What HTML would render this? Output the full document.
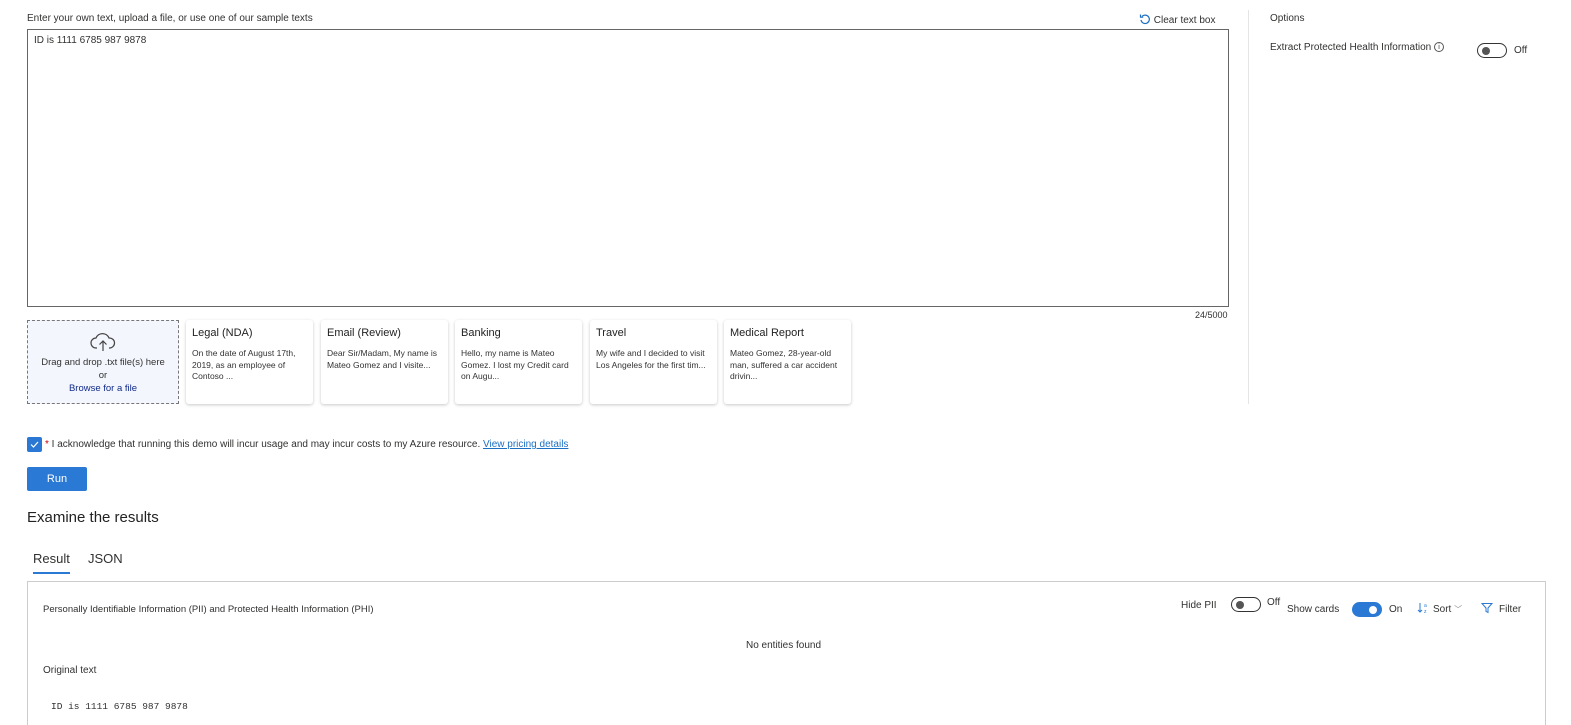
<!DOCTYPE html><html><head><style>
*{margin:0;padding:0;box-sizing:border-box}
html,body{width:1571px;height:725px;overflow:hidden}
body{background:#fff;font-family:"Liberation Sans",sans-serif;color:#323130;position:relative;font-size:10px}
.a{position:absolute;white-space:nowrap}
.card{position:absolute;top:320px;width:127px;height:84px;background:#fff;border-radius:3px;box-shadow:0 1px 3px rgba(0,0,0,.22);padding:7px 6px}
.card b{font-weight:normal;font-size:11px;display:block;margin-bottom:9px;color:#222}
.card p{font-size:8.5px;line-height:11.5px;color:#333;white-space:normal}
.tg{position:absolute;width:30px;height:15px;border:1px solid #333;border-radius:8px}
.tg i{position:absolute;top:3px;left:4px;width:8px;height:8px;border-radius:50%;background:#555}
</style></head><body>
<div class="a" style="left:27px;top:13px">Enter your own text, upload a file, or use one of our sample texts</div>
<div class="a" style="left:1139px;top:13px"><svg width="12" height="12" viewBox="0 0 12 12" style="vertical-align:-2px"><path d="M3 3.5A4.2 4.2 0 1 1 2 7" fill="none" stroke="#1d6fc4" stroke-width="1.2"/><path d="M1.5 1.5V4.2H4.2" fill="none" stroke="#1d6fc4" stroke-width="1.2"/></svg> Clear text box</div>
<div class="a" style="left:27px;top:29px;width:1202px;height:278px;border:1px solid #666"></div>
<div class="a" style="left:34px;top:35px">ID is 1111 6785 987 9878</div>
<div class="a" style="left:1195px;top:310px;font-size:9px">24/5000</div>
<div class="a" style="left:1248px;top:10px;width:1px;height:394px;background:#e5e5e5"></div>
<div class="a" style="left:1270px;top:13px">Options</div>
<div class="a" style="left:1270px;top:42px">Extract Protected Health Information <span style="display:inline-block;width:10px;height:10px;border:1px solid #555;border-radius:50%;font-size:7px;text-align:center;line-height:9px;vertical-align:1px">i</span></div>
<div class="tg" style="left:1477px;top:43px"><i></i></div>
<div class="a" style="left:1514px;top:45px">Off</div>
<div class="a" style="left:27px;top:320px;width:152px;height:84px;border:1px dashed #777;background:#f3f6fc;text-align:center;padding-top:11px;font-size:9.5px;line-height:13px;color:#333">
<svg width="28" height="20" viewBox="0 0 28 20"><path d="M8 16H7a5 5 0 0 1 0-10 7 7 0 0 1 13 0 5 5 0 0 1 1 10h-1" fill="none" stroke="#444" stroke-width="1.2"/><path d="M14 19V9M10.5 12.5 14 9l3.5 3.5" fill="none" stroke="#444" stroke-width="1.2"/></svg><br>Drag and drop .txt file(s) here<br>or<br><span style="color:#102a8a">Browse for a file</span></div>
<div class="card" style="left:186px"><b>Legal (NDA)</b><p>On the date of August 17th, 2019, as an employee of Contoso ...</p></div>
<div class="card" style="left:321px"><b>Email (Review)</b><p>Dear Sir/Madam, My name is Mateo Gomez and I visite...</p></div>
<div class="card" style="left:455px"><b>Banking</b><p>Hello, my name is Mateo Gomez. I lost my Credit card on Augu...</p></div>
<div class="card" style="left:590px"><b>Travel</b><p>My wife and I decided to visit Los Angeles for the first tim...</p></div>
<div class="card" style="left:724px"><b>Medical Report</b><p>Mateo Gomez, 28-year-old man, suffered a car accident drivin...</p></div>
<div class="a" style="left:27px;top:437px;width:15px;height:15px;background:#2b78d4;border-radius:2px"><svg width="15" height="15"><path d="M4 7.5l2.5 2.5L11 5" fill="none" stroke="#fff" stroke-width="1.2"/></svg></div>
<div class="a" style="left:45px;top:439px;font-size:10px"><span style="color:#c00">*</span> I acknowledge that running this demo will incur usage and may incur costs to my Azure resource. <span style="color:#1d6fc4;text-decoration:underline">View pricing details</span></div>
<div class="a" style="left:27px;top:467px;width:60px;height:24px;background:#2a7ad5;border-radius:2px;color:#fff;text-align:center;line-height:24px;font-size:11px">Run</div>
<div class="a" style="left:27px;top:509px;font-size:15px;color:#222">Examine the results</div>
<div class="a" style="left:33px;top:551px;font-size:13px">Result</div>
<div class="a" style="left:33px;top:572px;width:37px;height:2px;background:#2a7ad5"></div>
<div class="a" style="left:88px;top:551px;font-size:13px">JSON</div>
<div class="a" style="left:27px;top:581px;width:1519px;height:160px;border:1px solid #ccc"></div>
<div class="a" style="left:43px;top:604px;font-size:9.5px">Personally Identifiable Information (PII) and Protected Health Information (PHI)</div>
<div class="a" style="left:1181px;top:600px">Hide PII</div>
<div class="tg" style="left:1231px;top:597px"><i></i></div>
<div class="a" style="left:1267px;top:597px">Off</div>
<div class="a" style="left:1287px;top:604px">Show cards</div>
<div class="tg" style="left:1352px;top:602px;background:#2a7ad5;border-color:#2a7ad5"><i style="background:#fff;left:16px;top:2.5px"></i></div>
<div class="a" style="left:1389px;top:604px">On</div>
<div class="a" style="left:1417px;top:602px"><svg width="12" height="12"><path d="M3 1v9M1 8l2 2 2-2" fill="none" stroke="#2a7ad5"/><text x="7" y="5" font-size="5" fill="#2a7ad5" font-family="Liberation Sans">a</text><text x="7" y="11" font-size="5" fill="#2a7ad5" font-family="Liberation Sans">z</text></svg></div>
<div class="a" style="left:1433px;top:604px">Sort <span style="color:#888;font-size:8px">﹀</span></div>
<div class="a" style="left:1481px;top:602px"><svg width="12" height="12"><path d="M1 1.5h10L7 6v4.5L5 9.5V6z" fill="none" stroke="#2a7ad5"/></svg></div>
<div class="a" style="left:1499px;top:604px">Filter</div>
<div class="a" style="left:746px;top:640px">No entities found</div>
<div class="a" style="left:43px;top:665px">Original text</div>
<div class="a" style="left:51px;top:701px;font-family:'Liberation Mono',monospace;font-size:9.5px">ID is 1111 6785 987 9878</div>
</body></html>
